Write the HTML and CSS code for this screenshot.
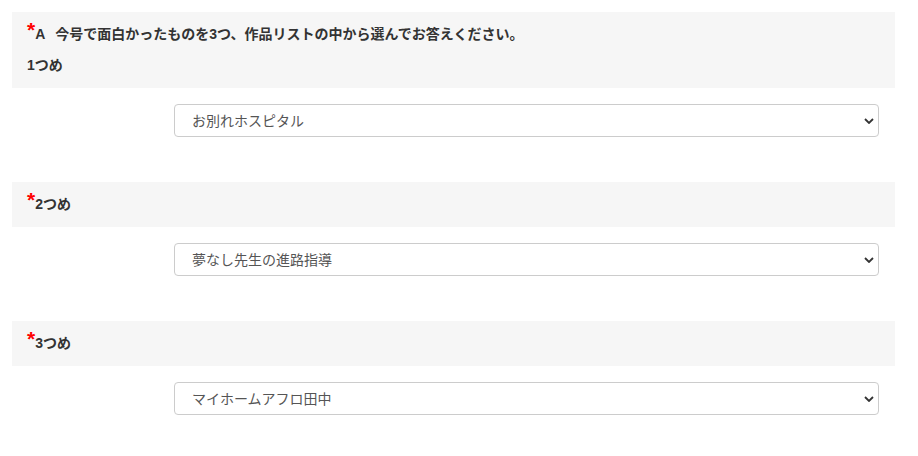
FILE: index.html
```html
<!DOCTYPE html>
<html lang="ja">
<head>
<meta charset="utf-8">
<link rel="stylesheet" href="styles.css">
</head>
<body>
<div class="form">
  <div class="group">
    <div class="label">
      <p class="line"><span class="req">*</span>A<span class="q">今号で面白かったものを3つ、作品リストの中から選んでお答えください。</span></p>
      <p class="line second">1つめ</p>
    </div>
    <div class="field">
      <select class="sel"><option>お別れホスピタル</option></select>
    </div>
  </div>
  <div class="group">
    <div class="label">
      <p class="line"><span class="req">*</span>2つめ</p>
    </div>
    <div class="field">
      <select class="sel"><option>夢なし先生の進路指導</option></select>
    </div>
  </div>
  <div class="group">
    <div class="label">
      <p class="line"><span class="req">*</span>3つめ</p>
    </div>
    <div class="field">
      <select class="sel"><option>マイホームアフロ田中</option></select>
    </div>
  </div>
</div>
</body>
</html>
```

FILE: styles.css
```css
html, body {
  margin: 0;
  padding: 0;
  background: #fff;
}
body {
  font-family: "Liberation Sans", "Noto Sans CJK JP", sans-serif;
  font-size: 14px;
  color: #333;
}
.form {
  padding: 12px 23px 0 12px;
}
.group {
  margin-bottom: 45px;
}
.label {
  background: #f6f6f6;
  padding: 12px 15px 12px;
  font-weight: bold;
}
.line {
  margin: 0;
  line-height: 21px;
  height: 21px;
}
.second {
  margin-top: 10px;
}
.req {
  color: #ff0000;
  font-size: 21px;
  font-weight: bold;
  line-height: 0;
  vertical-align: 2px;
}
.q {
  margin-left: 10px;
}
.field {
  padding: 16px 16px 0 162px;
}
.sel {
  display: block;
  width: 100%;
  height: 33px;
  box-sizing: border-box;
  border: 1px solid #cccccc;
  border-radius: 4px;
  background-color: #fff;
  padding: 0 30px 0 17px;
  font-family: "Liberation Sans", "Noto Sans CJK JP", sans-serif;
  font-size: 14px;
  color: #555;
  -webkit-appearance: none;
  appearance: none;
  background-image: url("data:image/svg+xml;utf8,<svg xmlns='http://www.w3.org/2000/svg' width='10' height='6' viewBox='0 0 10 6'><path d='M1 1 L5 5 L9 1' fill='none' stroke='%23333' stroke-width='1.8'/></svg>");
  background-repeat: no-repeat;
  background-position: right 4px center;
}
```
